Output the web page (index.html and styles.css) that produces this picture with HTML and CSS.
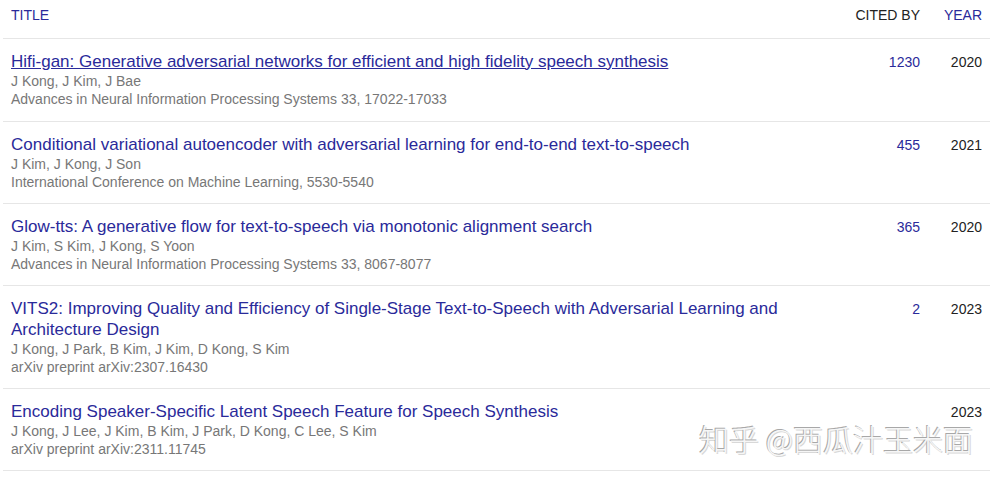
FILE: index.html
```html
<!DOCTYPE html>
<html lang="en">
<head>
<meta charset="utf-8">
<title>Publications</title>
<link rel="stylesheet" href="styles.css">
</head>
<body>
<div class="page">
  <table class="pubs">
    <thead>
      <tr class="head">
        <th class="c-title"><a href="#">TITLE</a></th>
        <th class="c-cit">CITED BY</th>
        <th class="c-year"><a href="#">YEAR</a></th>
      </tr>
    </thead>
    <tbody>
      <tr class="row first">
        <td class="c-title">
          <a class="t t-ul" href="#">Hifi-gan: Generative adversarial networks for efficient and high fidelity speech synthesis</a>
          <div class="g">J Kong, J Kim, J Bae</div>
          <div class="g">Advances in Neural Information Processing Systems 33, 17022-17033</div>
        </td>
        <td class="c-cit"><a href="#">1230</a></td>
        <td class="c-year">2020</td>
      </tr>
      <tr class="row">
        <td class="c-title">
          <a class="t" href="#">Conditional variational autoencoder with adversarial learning for end-to-end text-to-speech</a>
          <div class="g">J Kim, J Kong, J Son</div>
          <div class="g">International Conference on Machine Learning, 5530-5540</div>
        </td>
        <td class="c-cit"><a href="#">455</a></td>
        <td class="c-year">2021</td>
      </tr>
      <tr class="row">
        <td class="c-title">
          <a class="t" href="#">Glow-tts: A generative flow for text-to-speech via monotonic alignment search</a>
          <div class="g">J Kim, S Kim, J Kong, S Yoon</div>
          <div class="g">Advances in Neural Information Processing Systems 33, 8067-8077</div>
        </td>
        <td class="c-cit"><a href="#">365</a></td>
        <td class="c-year">2020</td>
      </tr>
      <tr class="row">
        <td class="c-title">
          <a class="t" href="#">VITS2: Improving Quality and Efficiency of Single-Stage Text-to-Speech with Adversarial Learning and Architecture Design</a>
          <div class="g">J Kong, J Park, B Kim, J Kim, D Kong, S Kim</div>
          <div class="g">arXiv preprint arXiv:2307.16430</div>
        </td>
        <td class="c-cit"><a href="#">2</a></td>
        <td class="c-year">2023</td>
      </tr>
      <tr class="row">
        <td class="c-title">
          <a class="t" href="#">Encoding Speaker-Specific Latent Speech Feature for Speech Synthesis</a>
          <div class="g">J Kong, J Lee, J Kim, B Kim, J Park, D Kong, C Lee, S Kim</div>
          <div class="g">arXiv preprint arXiv:2311.11745</div>
        </td>
        <td class="c-cit"></td>
        <td class="c-year">2023</td>
      </tr>
    </tbody>
  </table>
  <div class="watermark">知乎 @西瓜汁玉米面</div>
</div>
</body>
</html>
```

FILE: styles.css
```css
html, body {
  margin: 0;
  padding: 0;
  background: #fff;
}
body {
  font-family: "Liberation Sans", Arial, sans-serif;
  color: #222;
}
.page {
  position: relative;
  width: 999px;
  height: 478px;
  overflow: hidden;
}
.pubs {
  margin-left: 3px;
  width: 987px;
  border-collapse: collapse;
  table-layout: fixed;
}
.pubs th,
.pubs td {
  box-sizing: border-box;
}
.pubs a {
  color: #2a2a9a;
  text-decoration: none;
}
.head th {
  height: 38px;
  padding: 7px 8px 0;
  font-size: 14px;
  line-height: 16px;
  font-weight: normal;
  vertical-align: top;
  border-bottom: 1px solid #e6e6e6;
  color: #222;
}
.head th.c-title {
  text-align: left;
}
.c-cit {
  width: 100px;
  text-align: right;
}
.c-year {
  width: 62px;
  text-align: right;
}
.row td {
  padding: 12px 8px 12px;
  border-bottom: 1px solid #e6e6e6;
  vertical-align: top;
  font-size: 14px;
}
.row.first td {
  padding-bottom: 13px;
}
.row td.c-cit,
.row td.c-year {
  padding-top: 16px;
  line-height: 14px;
}
.row td.c-title {
  padding-right: 40px;
}
.t {
  display: block;
  font-size: 17px;
  line-height: 21px;
}
.t-ul {
  text-decoration: underline !important;
}
.g {
  color: #777;
  font-size: 14px;
  line-height: 18px;
}
.watermark {
  position: absolute;
  left: 699px;
  top: 424px;
  font-family: "Noto Sans CJK SC", sans-serif;
  font-size: 30px;
  line-height: 28px;
  font-weight: 300;
  color: #f6f6f6;
  text-shadow: -1px -1px 0 #a8a8a8, 1px 1px 0 #d8d8d8;
  white-space: nowrap;
}
```
